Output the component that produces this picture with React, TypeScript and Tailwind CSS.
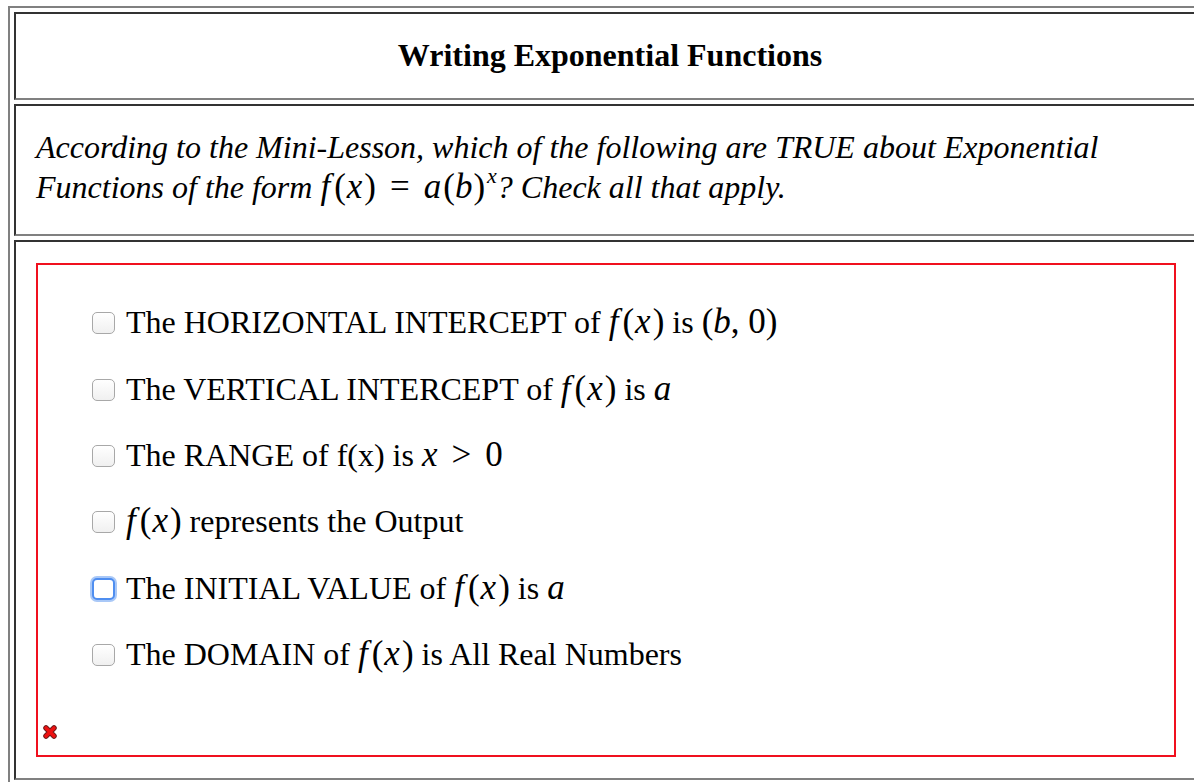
import type { ReactNode } from 'react';

// math pieces, MathJax-ish: a bit larger and looser than the body text
const I = ({ children }: { children: ReactNode }) => (
  <span className="italic text-[35px] leading-[32px]">{children}</span>
);
const P = ({ children }: { children: ReactNode }) => (
  <span className="not-italic text-[35px] leading-[32px]">{children}</span>
);

const Fx = () => (
  <span className="whitespace-nowrap inline-flex items-baseline">
    <I>f</I>
    <span className="ml-[4px]">
      <P>(</P>
    </span>
    <span className="ml-[1px]">
      <I>x</I>
    </span>
    <span className="ml-[2px]">
      <P>)</P>
    </span>
  </span>
);

const items: { id: number; focused?: boolean; label: ReactNode }[] = [
  {
    id: 1,
    label: (
      <>
        The HORIZONTAL INTERCEPT of <Fx /> is <P>(</P>
        <I>b</I>
        <P>, 0)</P>
      </>
    ),
  },
  {
    id: 2,
    label: (
      <>
        The VERTICAL INTERCEPT of <Fx /> is <I>a</I>
      </>
    ),
  },
  {
    id: 3,
    label: (
      <>
        The RANGE of f(x) is <I>x</I>
        <span className="mx-[14px]">
          <P>&gt;</P>
        </span>
        <P>0</P>
      </>
    ),
  },
  {
    id: 4,
    label: (
      <>
        <Fx /> represents the Output
      </>
    ),
  },
  {
    id: 5,
    focused: true,
    label: (
      <>
        The INITIAL VALUE of <Fx /> is <I>a</I>
      </>
    ),
  },
  {
    id: 6,
    label: (
      <>
        The DOMAIN of <Fx /> is All Real Numbers
      </>
    ),
  },
];

const WrongMark = () => (
  <svg width="14" height="14" viewBox="0 0 14 14">
    <g strokeLinecap="round">
      <path d="M3 3 L11 11 M11 3 L3 11" stroke="#6b1a1a" strokeWidth="5.5" />
      <path d="M3 3 L11 11 M11 3 L3 11" stroke="#ee1111" strokeWidth="3.6" />
    </g>
  </svg>
);

export default function App() {
  return (
    <div className="w-screen h-screen overflow-hidden bg-white text-black font-['Liberation_Serif',serif]">
      <div className="ml-[8px] mt-[6px] w-[1202px] border-l-2 border-t-2 border-[#808080] p-[4px] flex flex-col gap-[4px]">
        {/* Title */}
        <div className="h-[88px] border-2 border-t-[#333] border-l-[#333] border-b-[#808080] border-r-[#808080] flex items-center justify-center">
          <h3 className="text-[32px] font-bold leading-[38px] mt-[-2px]">Writing Exponential Functions</h3>
        </div>

        {/* Question */}
        <div className="h-[132px] border-2 border-t-[#333] border-l-[#333] border-b-[#808080] border-r-[#808080] flex items-center pl-[20px]">
          <p className="italic text-[32px] leading-[40px] mt-[-2px]">
            According to the Mini-Lesson, which of the following are TRUE about Exponential
            <br />
            Functions of the form <Fx />
            <span className="mx-[14px]">
              <P>=</P>
            </span>
            <I>a</I>
            <span className="ml-[2px]">
              <P>(</P>
            </span>
            <I>b</I>
            <span className="ml-[1px]">
              <P>)</P>
            </span>
            <span className="italic text-[22px] relative top-[-15px] ml-[2px]">x</span>? Check all that apply.
          </p>
        </div>

        {/* Answers */}
        <div className="h-[540px] border-2 border-t-[#333] border-l-[#333] border-b-[#808080] border-r-[#808080]">
          <div className="ml-[20px] mt-[21px] w-[1140px] h-[494px] border-2 border-[#f0101e]">
            <div className="pt-[25px] pl-[54px] flex flex-col">
              {items.map((item) => (
                <label key={item.id} className="h-[66.4px] flex items-center text-[32px] leading-[36px]">
                  <input
                    type="checkbox"
                    className={
                      item.focused
                        ? 'appearance-none w-[23px] h-[22px] mr-[11px] rounded-[5px] border-2 border-[#4f8ef0] bg-white ring-2 ring-[#a9c8f7] shrink-0'
                        : 'appearance-none w-[23px] h-[22px] mr-[11px] rounded-[5px] border border-[#a8a8a8] bg-gradient-to-b from-white to-[#f0f0f0] shrink-0'
                    }
                  />
                  <span className="mt-[-2px]">{item.label}</span>
                </label>
              ))}
            </div>
            <div className="pl-[5px] mt-[37px]">
              <WrongMark />
            </div>
          </div>
        </div>
      </div>
    </div>
  );
}
